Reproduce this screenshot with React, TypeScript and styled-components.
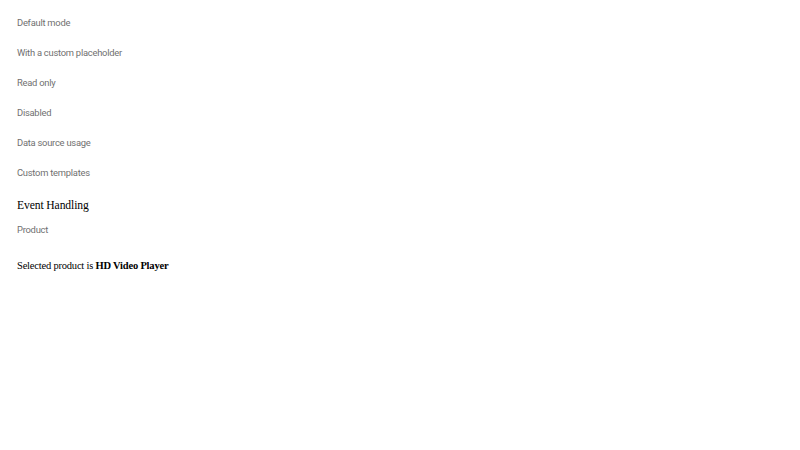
import React from 'react';
import styled, { createGlobalStyle } from 'styled-components';

const GlobalStyle = createGlobalStyle`
  html, body {
    margin: 0;
    padding: 0;
    background: #ffffff;
  }
`;

const Page = styled.div`
  padding: 16px 17px;
  display: flex;
  flex-direction: column;
`;

const FieldLabel = styled.label<{ $height?: number }>`
  display: block;
  height: ${(p) => p.$height ?? 30}px;
  font-family: Roboto, "Liberation Sans", sans-serif;
  font-size: 9.4px;
  letter-spacing: -0.25px;
  line-height: 14px;
  color: #707070;
`;

const Heading = styled.h4`
  margin: 3px 0 10px;
  font-family: "Liberation Serif", serif;
  font-size: 11.6px;
  letter-spacing: -0.1px;
  font-weight: normal;
  line-height: 14px;
  color: #000;
`;

const Result = styled.p`
  margin: 0;
  font-family: "Liberation Serif", serif;
  font-size: 10.5px;
  letter-spacing: -0.2px;
  line-height: 14px;
  color: #000;
`;

const sections = [
  'Default mode',
  'With a custom placeholder',
  'Read only',
  'Disabled',
  'Data source usage',
  'Custom templates',
];

export default function App() {
  return (
    <>
      <GlobalStyle />
      <Page>
        {sections.map((s) => (
          <FieldLabel key={s}>{s}</FieldLabel>
        ))}
        <Heading>Event Handling</Heading>
        <FieldLabel $height={36}>Product</FieldLabel>
        <Result>
          Selected product is <b>HD Video Player</b>
        </Result>
      </Page>
    </>
  );
}
